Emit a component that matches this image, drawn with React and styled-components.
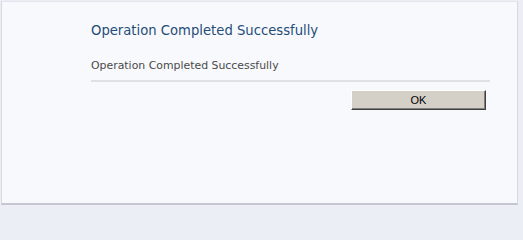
import React from "react";
import styled, { createGlobalStyle } from "styled-components";

const Global = createGlobalStyle`
  html, body { margin: 0; padding: 0; background: #eceef5; }
  body { font-family: "DejaVu Sans", Verdana, sans-serif; }
`;

const Panel = styled.div`
  box-sizing: border-box;
  margin: 1px 0 0 1px;
  width: 517px;
  height: 204px;
  background: #f8f9fc;
  border-top: 1px solid #e3e5ec;
  border-left: 1px solid #d6d9e2;
  border-right: 1px solid #d6d9e2;
  border-bottom: 2px solid #c4c6d0;
  padding: 21px 27px 0 89px;
  display: flex;
  flex-direction: column;
`;

const Title = styled.h1`
  margin: 0;
  font-family: "DejaVu Sans", Verdana, sans-serif;
  font-weight: normal;
  font-size: 13.2px;
  line-height: 16px;
  color: #1f4d78;
`;

const Message = styled.p`
  margin: 20px 0 0;
  font-size: 10.9px;
  line-height: 14px;
  color: #4a4a4a;
`;

const Divider = styled.hr`
  margin: 7px 0 0;
  border: 0;
  height: 2px;
  background: #e0e1e6;
`;

const Actions = styled.div`
  display: flex;
  justify-content: flex-end;
  padding-right: 4px;
  margin-top: 8px;
`;

const Button = styled.button`
  box-sizing: border-box;
  width: 135px;
  height: 20px;
  padding: 0;
  background: #d4d0c8;
  border: 1px solid;
  border-color: #ffffff #404040 #404040 #ffffff;
  box-shadow: inset -1px -1px 0 #808080;
  font-family: "Liberation Sans", Arial, sans-serif;
  font-size: 11px;
  color: #000;
`;

export default function App() {
  return (
    <>
      <Global />
      <Panel>
        <Title>Operation Completed Successfully</Title>
        <Message>Operation Completed Successfully</Message>
        <Divider />
        <Actions>
          <Button>OK</Button>
        </Actions>
      </Panel>
    </>
  );
}
